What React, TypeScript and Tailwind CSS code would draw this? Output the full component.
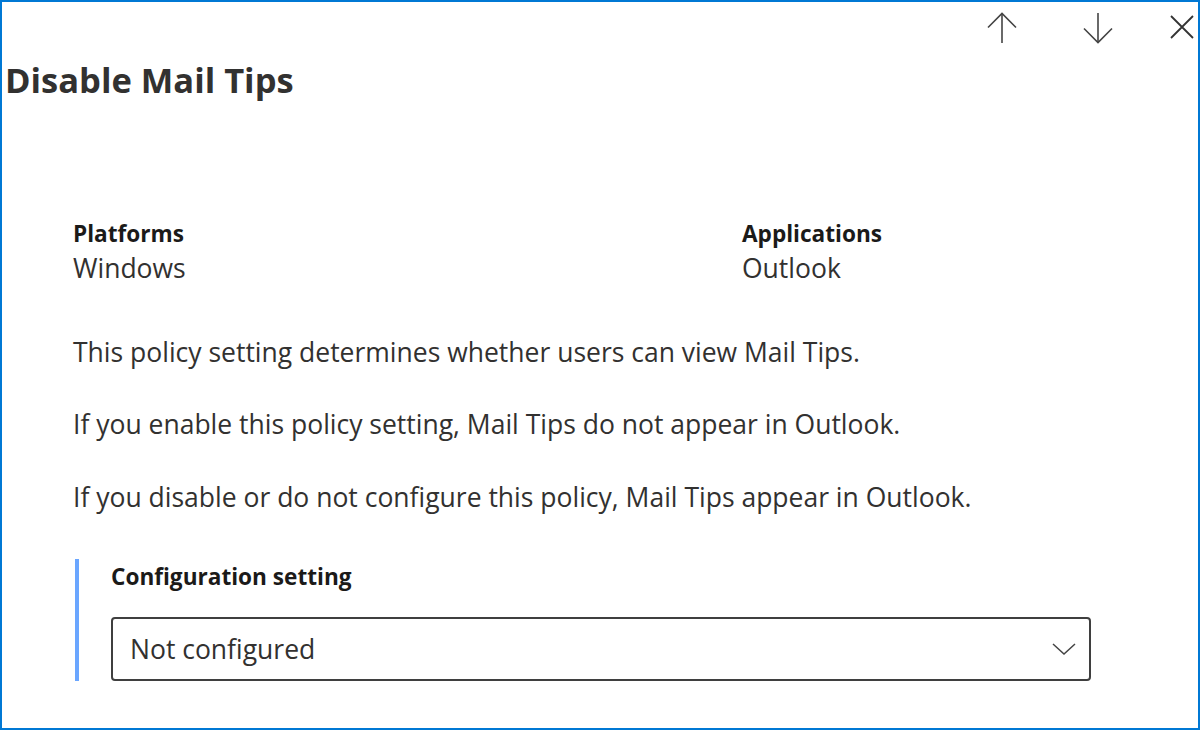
import React from 'react';

const font = { fontFamily: '"Open Sans", "Noto Sans", sans-serif' };

const ArrowUp = () => (
  <svg width="32" height="32" viewBox="0 0 32 32" fill="none" stroke="#444" strokeWidth="1.6">
    <path d="M16 1.5V31" />
    <path d="M2 15.5L16 1.5L30 15.5" />
  </svg>
);

const ArrowDown = () => (
  <svg width="32" height="32" viewBox="0 0 32 32" fill="none" stroke="#444" strokeWidth="1.6">
    <path d="M16 1V30.5" />
    <path d="M2 16.5L16 30.5L30 16.5" />
  </svg>
);

const Close = () => (
  <svg width="24" height="24" viewBox="0 0 24 24" fill="none" stroke="#333" strokeWidth="1.8">
    <path d="M1 1L23 23M23 1L1 23" />
  </svg>
);

const Chevron = () => (
  <svg width="24" height="12" viewBox="0 0 24 12" fill="none" stroke="#444" strokeWidth="1.5">
    <path d="M1 1L12 11L23 1" />
  </svg>
);

export default function App() {
  return (
    <div
      className="w-[1200px] h-[730px] border-2 border-[#0078d4] bg-white text-[#323130] flex flex-col overflow-hidden"
      style={font}
    >
      {/* top actions */}
      <div className="flex items-start justify-end pr-[4px] pt-[10px] h-[58px]">
        <button className="w-[32px] h-[32px]"><ArrowUp /></button>
        <button className="w-[32px] h-[32px] ml-[64px]"><ArrowDown /></button>
        <button className="w-[24px] h-[24px] ml-[56px] mt-[3px]"><Close /></button>
      </div>

      <h1 className="pl-[3px] text-[34.5px] font-bold leading-[40px] text-[#323130]">Disable Mail Tips</h1>

      <div className="pl-[71px] mt-[120px]">
        <div className="flex">
          <div className="w-[669px]">
            <div className="text-[22.6px] font-bold leading-[28px] text-[#1b1a19]">Platforms</div>
            <div className="mt-[4px] text-[26.5px] leading-[32px]">Windows</div>
          </div>
          <div>
            <div className="text-[22.6px] font-bold leading-[28px] text-[#1b1a19]">Applications</div>
            <div className="mt-[4px] text-[26.5px] leading-[32px]">Outlook</div>
          </div>
        </div>

        <p className="mt-[52px] text-[26.5px] leading-[32px]">This policy setting determines whether users can view Mail Tips.</p>
        <p className="mt-[40px] text-[26.5px] leading-[32px]">If you enable this policy setting, Mail Tips do not appear in Outlook.</p>
        <p className="mt-[41px] text-[26.5px] leading-[32px]">If you disable or do not configure this policy, Mail Tips appear in Outlook.</p>

        {/* configuration setting */}
        <div className="mt-[46px] ml-[2px] border-l-4 border-[#6aa6ff] pl-[32px] pt-[4px] w-[1016px]">
          <div className="text-[22.6px] font-bold leading-[28px] text-[#1b1a19]">Configuration setting</div>
          <div className="mt-[26px] h-[64px] border-2 border-[#3f3f3f] rounded-[4px] flex items-center justify-between pl-[17px] pr-[13px]">
            <span className="text-[26.5px] leading-[32px]">Not configured</span>
            <Chevron />
          </div>
        </div>
      </div>
    </div>
  );
}
